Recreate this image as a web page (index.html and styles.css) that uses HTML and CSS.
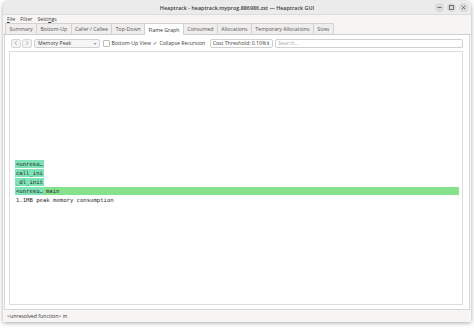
FILE: index.html
```html
<!DOCTYPE html>
<html>
<head>
<meta charset="utf-8">
<link rel="stylesheet" href="styles.css">
</head>
<body>
<div class="window">
  <div class="titlebar">
    <span class="title">Heaptrack - heaptrack.myprog.886986.zst — Heaptrack GUI</span>
    <div class="controls">
      <span class="ctl"><svg width="7" height="7" viewBox="0 0 7 7"><path d="M1.5 3.5h4" stroke="#555" stroke-width="0.8"/></svg></span>
      <span class="ctl"><svg width="7" height="7" viewBox="0 0 7 7"><rect x="1.5" y="1.5" width="4" height="4" fill="none" stroke="#555" stroke-width="0.8"/></svg></span>
      <span class="ctl"><svg width="7" height="7" viewBox="0 0 7 7"><path d="M1.8 1.8l3.4 3.4M5.2 1.8l-3.4 3.4" stroke="#555" stroke-width="0.8"/></svg></span>
    </div>
  </div>
  <div class="menubar">
    <span><u>F</u>ile</span><span>Filter</span><span>Setti<u>n</u>gs</span>
  </div>
  <div class="tabs">
    <span class="tab">Summary</span>
    <span class="tab">Bottom-Up</span>
    <span class="tab">Caller / Callee</span>
    <span class="tab">Top-Down</span>
    <span class="tab active">Flame Graph</span>
    <span class="tab">Consumed</span>
    <span class="tab">Allocations</span>
    <span class="tab">Temporary Allocations</span>
    <span class="tab">Sizes</span>
  </div>
  <div class="pane">
    <div class="toolbar">
      <span class="navbtn"><svg width="6" height="6" viewBox="0 0 6 6"><path d="M4 0.8L1.8 3L4 5.2" fill="none" stroke="#aaa" stroke-width="0.8"/></svg></span>
      <span class="navbtn"><svg width="6" height="6" viewBox="0 0 6 6"><path d="M2 0.8L4.2 3L2 5.2" fill="none" stroke="#aaa" stroke-width="0.8"/></svg></span>
      <span class="combo">Memory Peak<span class="arrow">▾</span></span>
      <span class="check"><span class="box"></span>Bottom-Up View</span>
      <span class="check"><span class="tick">✓</span>Collapse Recursion</span>
      <span class="spin">Cost Threshold: 0.10%<span class="spinarrows">⬍</span></span>
      <span class="search">Search...</span>
    </div>
    <div class="canvas">
      <div class="flame">
        <div class="row"><span class="fb teal">&lt;unreso…</span></div>
        <div class="row"><span class="fb teal">call_ini</span></div>
        <div class="row"><span class="fb teal">_dl_init</span></div>
        <div class="row"><span class="fb teal">&lt;unreso…</span><span class="fb green">main</span></div>
        <div class="caption">1.1MB peak memory consumption</div>
      </div>
    </div>
  </div>
  <div class="status">&lt;unresolved function&gt; in</div>
</div>
</body>
</html>
```
FILE: styles.css
```css
html, body {
  margin: 0;
  padding: 0;
  background: #ffffff;
  width: 474px;
  height: 333px;
  overflow: hidden;
}
body {
  font-family: "Open Sans", "Noto Sans", sans-serif;
  font-size: 5.2px;
  color: #3c3c3c;
  font-variant-ligatures: none;
}
.window {
  margin: 1px 0 0 3px;
  width: 468px;
  height: 321px;
  background: #f6f5f4;
  border-radius: 5px 5px 0 0;
  box-shadow: 0 1px 4px rgba(0,0,0,0.35);
  display: flex;
  flex-direction: column;
}
.titlebar {
  height: 13px;
  position: relative;
  display: flex;
  align-items: center;
  justify-content: center;
  background: #ebebeb;
  border-radius: 5px 5px 0 0;
  border-bottom: 1px solid #dcdcdc;
}
.title {
  font-size: 5.4px;
  font-weight: 600;
  color: #3d3d3d;
}
.controls {
  position: absolute;
  right: 3px;
  top: 2px;
  display: flex;
  gap: 3px;
}
.ctl {
  width: 9px;
  height: 9px;
  border-radius: 50%;
  background: #dadada;
  display: flex;
  align-items: center;
  justify-content: center;
}
.menubar {
  height: 8px;
  display: flex;
  gap: 5px;
  padding-left: 4px;
  align-items: center;
  font-size: 5.2px;
}
.menubar u { text-decoration-thickness: 0.5px; }
.tabs {
  display: flex;
  padding-left: 2px;
  height: 11px;
  border-bottom: 1px solid #cfcfcf;
  font-size: 5.2px;
}
.tab {
  padding: 0 3.4px;
  display: flex;
  align-items: center;
  white-space: nowrap;
  border: 1px solid #d2d2d2;
  border-bottom: none;
  border-left: none;
  background: #efeeed;
  color: #555;
}
.tab:first-child { border-left: 1px solid #d2d2d2; }
.tab.active {
  background: #ffffff;
  color: #333;
  margin-bottom: -1px;
}
.pane {
  flex: 1;
  background: #ffffff;
  margin: 0 1px;
  border: 1px solid #d8d8d8;
  border-top: none;
  display: flex;
  flex-direction: column;
  padding: 3px 6px 4px 4px;
}
.toolbar {
  height: 10px;
  display: flex;
  align-items: center;
  gap: 2.5px;
  font-size: 5.2px;
  white-space: nowrap;
  margin-bottom: 3px;
  margin-left: 2px;
}
.navbtn {
  width: 10px;
  height: 9px;
  border: 1px solid #d6d6d6;
  border-radius: 2px;
  background: #f4f4f4;
  display: flex;
  align-items: center;
  justify-content: center;
  box-sizing: border-box;
  margin-right: -1.5px;
}
.combo {
  width: 66px;
  height: 9px;
  margin-left: 1px;
  box-sizing: border-box;
  border: 1px solid #d0d0d0;
  border-radius: 2px;
  background: #f5f5f5;
  padding: 0 3px;
  display: flex;
  align-items: center;
  justify-content: space-between;
}
.arrow { font-size: 4px; color: #777; }
.check {
  display: flex;
  align-items: center;
  gap: 2px;
}
.box {
  width: 5px;
  height: 5px;
  border: 1px solid #bdbdbd;
  border-radius: 1px;
  background: #fff;
}
.tick { font-size: 5px; color: #333; }
.spin {
  width: 63px;
  height: 9px;
  box-sizing: border-box;
  border: 1px solid #cfcfcf;
  border-radius: 2px;
  padding: 0 2px;
  display: flex;
  align-items: center;
  justify-content: space-between;
  margin-left: 2px;
}
.spinarrows { font-size: 5px; color: #888; }
.search {
  flex: 1;
  height: 9px;
  box-sizing: border-box;
  border: 1px solid #cfcfcf;
  border-radius: 2px;
  padding: 0 2px;
  color: #aaa;
  display: flex;
  align-items: center;
}
.canvas {
  flex: 1;
  border: 1px solid #dcdcdc;
  display: flex;
  flex-direction: column;
  justify-content: flex-start;
}
.flame {
  margin-top: 108px;
  padding-left: 5px;
  padding-right: 3px;
  font-family: "DejaVu Sans Mono", monospace;
  font-size: 5.6px;
  color: #2b2b2b;
}
.row {
  display: flex;
  height: 9px;
}
.fb {
  height: 8px;
  line-height: 8px;
  padding-left: 1px;
  overflow: hidden;
  white-space: nowrap;
}
.teal {
  width: 28px;
  background: #7fe2b6;
}
.green {
  flex: 1;
  background: #86e28c;
  padding-left: 2px;
}
.caption {
  margin-top: 1px;
  padding-left: 1px;
  font-size: 5.6px;
}
.status {
  height: 12px;
  display: flex;
  align-items: center;
  padding-left: 4px;
  font-size: 5.2px;
  color: #333;
}
```
